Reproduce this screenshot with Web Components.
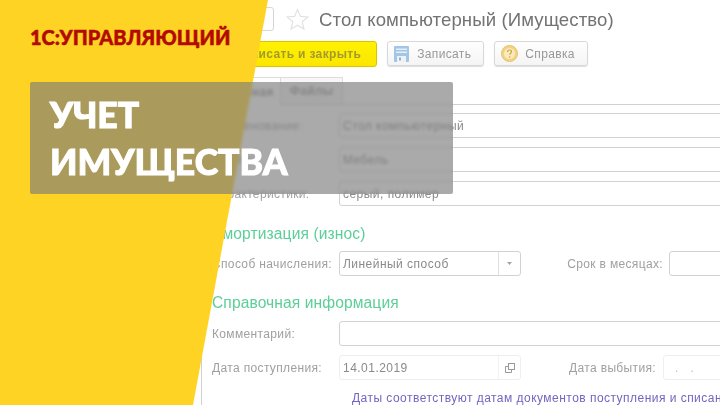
<!DOCTYPE html>
<html lang="ru">
<head>
<meta charset="utf-8">
<title>Учет имущества</title>
<style>
html, body { margin: 0; padding: 0; background: #fff; }
</style>
</head>
<body>
<promo-screen>
  <asset-form slot="form"></asset-form>
  <promo-band slot="band">1С:УПРАВЛЯЮЩИЙ</promo-band>
  <promo-panel slot="panel">УЧЕТ<br>ИМУЩЕСТВА</promo-panel>
</promo-screen>

<script>
// small helper, every element gets its own open shadow root from a string
function tpl(html) {
   const t = document.createElement('template')
   t.innerHTML = html
   return t
}

class Base extends HTMLElement {
   constructor() {
      super()
      this.attachShadow({ mode: 'open' })
      this.shadowRoot.appendChild(this.constructor.template.content.cloneNode(true))
   }
}

class PromoScreen extends Base {
   static template = tpl(`
<style>
:host { display: block; position: relative; width: 720px; height: 405px; overflow: hidden; background: #fff; }
</style>
<slot name="form"></slot>
<slot name="band"></slot>
<slot name="panel"></slot>`)
}

// yellow slanted band, lies over the form
class PromoBand extends Base {
   static template = tpl(`
<style>
:host {
   display: block; position: absolute; left: 0; top: 0; width: 268px; height: 405px;
   background: #ffd324;
   clip-path: polygon(0 0, 268px 0, 193px 405px, 0 405px);
   box-sizing: border-box; padding: 24px 0 0 30px;
   font: 900 20px/26px Lato, "Liberation Sans", sans-serif; color: #b30a00;
   -webkit-text-stroke: .5px #b30a00;
   white-space: nowrap; letter-spacing: 0;
}
</style>
<slot></slot>`)
}

// grey translucent panel with the big title
class PromoPanel extends Base {
   static template = tpl(`
<style>
:host {
   display: block; position: absolute; left: 30px; top: 82px; width: 423px; height: 112px;
   box-sizing: border-box; padding: 9px 0 0 20px; border-radius: 2px;
   background: rgba(123,123,123,.644);
   -webkit-backdrop-filter: blur(1.4px); backdrop-filter: blur(1.4px);
   font: 900 35.500px/47px Lato, "Liberation Sans", sans-serif; color: #fff;
   -webkit-text-stroke: 1px #fff;
   white-space: nowrap;
}
</style>
<slot></slot>`)
}

class ToolButton extends Base {
   static template = tpl(`
<style>
:host {
   display: inline-flex; align-items: center; gap: var(--gap, 8px); box-sizing: border-box; height: 25px;
   border: 1px solid #d8d8d8; border-radius: 3px; padding: 0 12px 0 6px;
   background: linear-gradient(#fff, #f4f4f4); box-shadow: 0 1px 1px #ddd;
   font: 12px "Liberation Sans", Arial, sans-serif; letter-spacing: .35px; color: #989898; white-space: nowrap;
}
:host([default]) {
   height: 26px; background: linear-gradient(#fff200, #fbe600); border-color: #dcc400;
   box-shadow: none; font-weight: bold; color: #a39a2c; padding: 0 15px;
}
</style>
<slot></slot>`)
}

class FormField extends Base {
   static template = tpl(`
<style>
:host { display: flex; align-items: center; height: 25px; font: 12px "Liberation Sans", Arial, sans-serif; letter-spacing: .35px; color: #a0a0a0; white-space: nowrap; }
.label { flex: none; width: var(--label, 127px); text-align: var(--align, left); padding-right: var(--label-gap, 0); box-sizing: border-box; }
.box {
   flex: none; width: var(--box, 420px); height: 25px; box-sizing: border-box; display: flex; align-items: center;
   border: 1px solid #d2d2d2; border-radius: 3px; background: #fff; color: #8a8a8a; padding-left: var(--pad, 3px);
   letter-spacing: .47px;
}
:host([pale]) .box { border-color: #eeeeee; }
.value { flex: 1; word-spacing: var(--words, 0); color: var(--value, inherit); }
.btn { flex: none; width: 21px; height: 100%; border-left: 1px solid #e0e0e0; display: flex; align-items: center; justify-content: center; }
:host(:not([button])) .btn { display: none; }
:host([pale]) .btn { border-color: #f2f2f2; }
</style>
<span class="label"></span>
<div class="box"><span class="value"></span><span class="btn"><slot></slot></span></div>`)

   connectedCallback() {
      this.shadowRoot.querySelector('.label').textContent = this.getAttribute('label') ?? ''
      this.shadowRoot.querySelector('.value').textContent = this.getAttribute('value') ?? ''
   }
}

class FormRow extends Base {
   static template = tpl(`
<style>
:host { display: flex; }
</style>
<slot></slot>`)
}

class SectionTitle extends Base {
   static template = tpl(`
<style>
:host { display: block; font: 15.6px/18px "Liberation Sans", Arial, sans-serif; letter-spacing: .1px; color: #5ccf98; white-space: nowrap; }
</style>
<slot></slot>`)
}

class AssetForm extends Base {
   static template = tpl(`
<style>
:host {
   display: flex; flex-direction: column; box-sizing: border-box; width: 720px; height: 405px;
   padding: 7px 0 0 201px; overflow: hidden; filter: blur(.35px);
   font-family: "Liberation Sans", Arial, sans-serif;
}
.head { display: flex; align-items: center; height: 24px; flex: none; }
.nav { flex: none; box-sizing: border-box; width: 29px; height: 24px; margin-left: 44px; border: 1px solid #d6d6d6; border-radius: 3px; }
.star { flex: none; margin-left: 12px; }
h1 { margin: 2px 0 0 10px; font-size: 18.6px; font-weight: normal; color: #737373; letter-spacing: .1px; white-space: nowrap; }
.tools { display: flex; align-items: flex-start; gap: 10px; margin: 10px 0 0 19px; height: 26px; flex: none; }
.tabs { display: flex; margin: 10px 0 0 4px; height: 27px; flex: none; font-size: 12px; font-weight: bold; color: #9a9a9a; letter-spacing: .3px; }
.tab { box-sizing: border-box; height: 28px; display: flex; align-items: center; justify-content: center; border: 1px solid #ddd; border-bottom: 0; }
.tab.on { width: 76px; background: #fff; position: relative; }
.tab.off { width: 62px; background: #f7f7f7; height: 27px; border-left: 0; }
.page { flex: 1; border-top: 1px solid #d0d0d0; border-left: 1px solid #d0d0d0; padding: 8px 0 0 10px; display: flex; flex-direction: column; }
.rows { display: flex; flex-direction: column; gap: 9px; }
.s1 { margin-top: 19px; margin-bottom: 8px; }
.s2 { margin-top: 18px; margin-bottom: 9px; }
.note { margin: 11px 0 0 140px; font-size: 12px; letter-spacing: .47px; color: #7266c0; white-space: nowrap; }
</style>
<div class="head">
   <span class="nav"></span>
   <svg class="star" width="23" height="23" viewBox="0 0 23 23"><path d="M11.5 1.5l2.9 6.9 7.4.6-5.6 4.8 1.7 7.2-6.4-3.8-6.4 3.8 1.7-7.2L1.2 9l7.4-.6z" fill="#fff" stroke="#e2e2e2" stroke-width="1.2"/></svg>
   <h1>Стол компьютерный (Имущество)</h1>
</div>
<div class="tools">
   <tool-button default>Записать и закрыть</tool-button>
   <tool-button>
      <svg width="15" height="16" viewBox="0 0 15 16"><rect width="15" height="16" rx="1" fill="#a3c6e6"/><rect x="2" y="2.500" width="11" height="1.500" fill="#e3eef8"/><rect x="2" y="5.500" width="11" height="1.500" fill="#e3eef8"/><rect x="3" y="10" width="9" height="6" fill="#edf2f7"/><rect x="5" y="11.500" width="2" height="3" fill="#8fb3d6"/></svg>
      Записать
   </tool-button>
   <tool-button style="--gap:7px">
      <svg width="17" height="17" viewBox="0 0 17 17"><circle cx="8.500" cy="8.500" r="8" fill="#f2d284" stroke="#e6c26c"/><circle cx="8.500" cy="8.500" r="5.500" fill="#fbeabb"/><path d="M6.500 6.900c0-1.200.9-1.900 2-1.900s2 .7 2 1.800c0 1.400-1.800 1.400-1.800 3" fill="none" stroke="#cfa347" stroke-width="1.200"/><circle cx="8.700" cy="12" r=".8" fill="#cfa347"/></svg>
      Справка
   </tool-button>
</div>
<div class="tabs">
   <span class="tab on">Основная</span>
   <span class="tab off">Файлы</span>
</div>
<div class="page">
   <div class="rows">
      <form-field label="Наименование:" value="Стол компьютерный"></form-field>
      <form-field label="Группа:" value="Мебель"></form-field>
      <form-field label="Характеристики:" value="серый, полимер"></form-field>
   </div>
   <section-title class="s1">Амортизация (износ)</section-title>
   <form-row>
      <form-field label="Способ начисления:" value="Линейный способ" button style="--box:182px">
         <svg width="5" height="3" viewBox="0 0 5 3"><path d="M0 0h5L2.500 3z" fill="#a5a5a5"/></svg>
      </form-field>
      <form-field label="Срок в месяцах:" style="--label:148px;--align:right;--label-gap:6px;--box:100px"></form-field>
   </form-row>
   <section-title class="s2">Справочная информация</section-title>
   <div class="rows">
      <form-field label="Комментарий:"></form-field>
      <form-row>
         <form-field label="Дата поступления:" value="14.01.2019" button pale style="--box:182px">
            <svg width="10" height="10" viewBox="0 0 10 10" fill="none" stroke="#999"><rect x="3.500" y=".5" width="6" height="6"/><path d="M3.500 3.500H.5v6h6V6.500"/></svg>
         </form-field>
         <form-field label="Дата выбытия:" value=". ." pale style="--label:142px;--align:right;--label-gap:7px;--box:100px;--pad:11px;--words:8px;--value:#c4c4c4"></form-field>
      </form-row>
   </div>
   <div class="note">Даты соответствуют датам документов поступления и списания</div>
</div>`)
}

function register() {
   customElements.define('promo-band', PromoBand)
   customElements.define('promo-panel', PromoPanel)
   customElements.define('tool-button', ToolButton)
   customElements.define('form-field', FormField)
   customElements.define('form-row', FormRow)
   customElements.define('section-title', SectionTitle)
   customElements.define('asset-form', AssetForm)
   customElements.define('promo-screen', PromoScreen)
}

register()
</script>
</body>
</html>
